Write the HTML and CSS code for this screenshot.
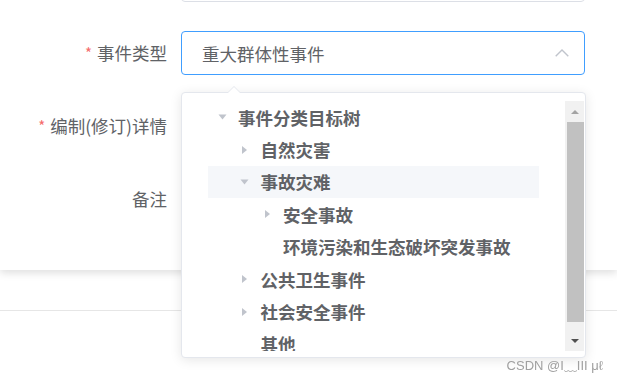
FILE: index.html
```html
<!DOCTYPE html>
<html lang="zh-CN">
<head>
    <meta charset="UTF-8">
    <meta name="viewport" content="width=device-width, initial-scale=1.0">
    <title>事件类型</title>
    <link rel="stylesheet" href="styles.css">
</head>
<body>
    <div class="dialog">
        <form class="form">
            <div class="form-item">
                <label class="form-label"></label>
                <div class="form-content">
                    <div class="input"></div>
                </div>
            </div>

            <div class="form-item">
                <label class="form-label is-required">事件类型</label>
                <div class="form-content">
                    <div class="select is-focus">
                        <span class="select-value">重大群体性事件</span>
                        <svg class="select-arrow" width="14" height="8" viewBox="0 0 14 8">
                            <polyline points="0.7,7.3 7,1 13.3,7.3" fill="none" stroke="#c0c4cc" stroke-width="1.4"/>
                        </svg>
                    </div>

                    <!-- 下拉树 -->
                    <div class="popper">
                        <div class="popper-body">
                            <div class="scroll-area">
                                <div class="tree">
                                    <div class="tree-node level-1">
                                        <span class="caret expanded"></span>
                                        <span class="node-label">事件分类目标树</span>
                                    </div>
                                    <div class="tree-node level-2">
                                        <span class="caret"></span>
                                        <span class="node-label">自然灾害</span>
                                    </div>
                                    <div class="tree-node level-2 is-current">
                                        <span class="caret expanded"></span>
                                        <span class="node-label">事故灾难</span>
                                    </div>
                                    <div class="tree-node level-3">
                                        <span class="caret"></span>
                                        <span class="node-label">安全事故</span>
                                    </div>
                                    <div class="tree-node level-3">
                                        <span class="caret leaf"></span>
                                        <span class="node-label">环境污染和生态破坏突发事故</span>
                                    </div>
                                    <div class="tree-node level-2">
                                        <span class="caret"></span>
                                        <span class="node-label">公共卫生事件</span>
                                    </div>
                                    <div class="tree-node level-2">
                                        <span class="caret"></span>
                                        <span class="node-label">社会安全事件</span>
                                    </div>
                                    <div class="tree-node level-2">
                                        <span class="caret leaf"></span>
                                        <span class="node-label">其他</span>
                                    </div>
                                </div>
                            </div>
                            <div class="scrollbar">
                                <div class="sb-btn sb-up"></div>
                                <div class="sb-thumb"></div>
                                <div class="sb-spacer"></div>
                                <div class="sb-btn sb-down"></div>
                            </div>
                        </div>
                    </div>
                </div>
            </div>

            <div class="form-item">
                <label class="form-label is-required">编制(修订)详情</label>
                <div class="form-content"></div>
            </div>

            <div class="form-item">
                <label class="form-label">备注</label>
                <div class="form-content"></div>
            </div>
        </form>
    </div>

    <div class="footer"></div>

    <div class="watermark">CSDN @I﹏III μℓ</div>
</body>
</html>
```

FILE: styles.css
```css
* {
    box-sizing: border-box;
    margin: 0;
    padding: 0;
}

body {
    font-family: "Noto Sans CJK SC", "Liberation Sans", sans-serif;
    font-size: 17.5px;
    color: #606266;
    background-color: #fff;
    height: 382px;
}

.dialog {
    background-color: #fff;
    margin-top: -42px;
    padding-bottom: 49px;
    box-shadow: 0 3px 8px rgba(0, 0, 0, 0.13);
    position: relative;
    z-index: 1;
}

.form-item {
    display: flex;
    align-items: center;
    height: 44px;
    margin-bottom: 29px;
}

.form-item:last-child {
    margin-bottom: 0;
}

.form-label {
    width: 167px;
    text-align: right;
    line-height: 44px;
    white-space: nowrap;
}

.form-label.is-required::before {
    content: "*";
    color: #f56c6c;
    font-size: 15px;
    margin-right: 5px;
    position: relative;
    top: -1px;
}

.form-content {
    position: relative;
    margin-left: 14px;
    width: 404px;
    height: 44px;
}

.input {
    height: 44px;
    border: 1px solid #dcdfe6;
    border-radius: 4px;
}

.select {
    height: 44px;
    border: 1px solid #dcdfe6;
    border-radius: 4px;
    display: flex;
    align-items: center;
    padding: 0 15px 0 20px;
}

.select.is-focus {
    border-color: #409eff;
}

.select-value {
    flex: 1;
    color: #606266;
}

.select-arrow {
    display: block;
}

/* 下拉框 */
.popper {
    position: absolute;
    top: 61px;
    left: 0;
    width: 405px;
    height: 266px;
    background-color: #fff;
    border: 1px solid #e4e7ed;
    border-radius: 4px;
    box-shadow: 0 2px 12px rgba(0, 0, 0, 0.1);
    padding: 8px 1px 6px 0;
    z-index: 10;
}

.popper::before,
.popper::after {
    content: "";
    position: absolute;
    left: 46px;
    width: 0;
    height: 0;
    border-left: 6px solid transparent;
    border-right: 6px solid transparent;
}

.popper::before {
    top: -7px;
    border-bottom: 6px solid #e4e7ed;
}

.popper::after {
    top: -6px;
    border-bottom: 6px solid #fff;
}

.popper-body {
    display: flex;
    height: 100%;
}

.scroll-area {
    flex: 1;
    overflow: hidden;
    padding-left: 26px;
}

.tree {
    width: 331px;
}

.tree-node {
    display: flex;
    align-items: center;
    height: 32.4px;
    white-space: nowrap;
}

.tree-node.level-2 {
    padding-left: 22.5px;
}

.tree-node.level-3 {
    padding-left: 45px;
}

.tree-node.is-current {
    background-color: #f5f7fa;
}

.caret {
    width: 28px;
    height: 12px;
    display: flex;
    align-items: center;
    justify-content: center;
}

.caret::before {
    content: "";
    width: 0;
    height: 0;
    border-left: 5px solid #c0c4cc;
    border-top: 4.5px solid transparent;
    border-bottom: 4.5px solid transparent;
}

.caret.expanded::before {
    transform: rotate(90deg);
}

.caret.leaf::before {
    display: none;
}

.node-label {
    margin-left: 2px;
    font-weight: bold;
    color: #606266;
}

/* 滚动条 */
.scrollbar {
    width: 19px;
    background-color: #f1f1f1;
    display: flex;
    flex-direction: column;
}

.sb-btn {
    height: 21px;
    display: flex;
    align-items: center;
    justify-content: center;
}

.sb-btn::before {
    content: "";
    width: 0;
    height: 0;
    border-left: 4px solid transparent;
    border-right: 4px solid transparent;
}

.sb-up::before {
    border-bottom: 4px solid #a3a3a3;
}

.sb-down::before {
    border-top: 4px solid #505050;
}

.sb-thumb {
    height: 200px;
    margin-left: 2px;
    background-color: #c1c1c1;
}

.sb-spacer {
    flex: 1;
}

.footer {
    height: 41px;
    border-bottom: 1px solid #e6e6e6;
}

.watermark {
    position: fixed;
    right: 14px;
    bottom: 8px;
    font-family: "Liberation Sans", "DejaVu Sans", sans-serif;
    font-size: 13px;
    color: #a0a0a0;
    z-index: 20;
}
```
